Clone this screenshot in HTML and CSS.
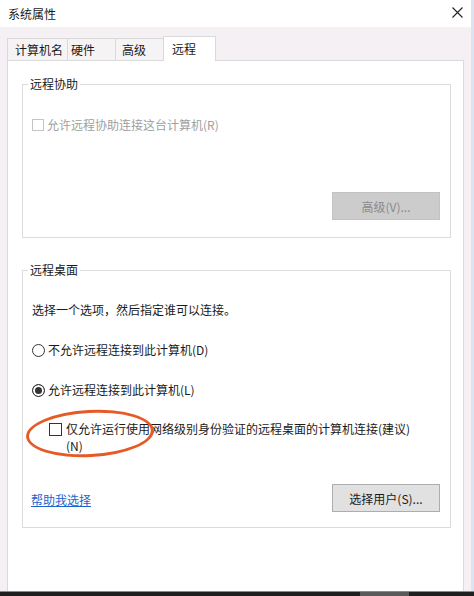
FILE: index.html
```html
<!DOCTYPE html>
<html lang="zh-CN">
<head>
  <meta charset="UTF-8">
  <title>系统属性</title>
  <link rel="stylesheet" href="styles.css">
</head>
<body>
  <div class="window">
    <div class="titlebar">
      <span class="title">系统属性</span>
      <svg class="close" width="11" height="11" viewBox="0 0 11 11">
        <path d="M0.5 0.5 L10.5 10.5 M10.5 0.5 L0.5 10.5" stroke="#222" stroke-width="1.1" fill="none"/>
      </svg>
    </div>

    <div class="tabs">
      <div class="tab t1">计算机名</div>
      <div class="tab t2">硬件</div>
      <div class="tab t3">高级</div>
      <div class="tab active">远程</div>
    </div>

    <div class="page">
      <fieldset class="group assist">
        <legend>远程协助</legend>
        <label class="opt disabled"><span class="box"></span>允许远程协助连接这台计算机(R)</label>
        <div class="actions">
          <button class="btn" disabled>高级(V)...</button>
        </div>
      </fieldset>

      <fieldset class="group desktop">
        <legend>远程桌面</legend>
        <p class="hint">选择一个选项，然后指定谁可以连接。</p>
        <label class="opt"><span class="radio"></span>不允许远程连接到此计算机(D)</label>
        <label class="opt"><span class="radio on"></span>允许远程连接到此计算机(L)</label>
        <label class="opt nla">
          <span class="box"></span>
          <span class="nla-text">仅允许运行使用网络级别身份验证的远程桌面的计算机连接(建议)<br>(N)</span>
          <span class="mark"></span>
        </label>
        <div class="foot">
          <a href="#" class="help">帮助我选择</a>
          <button class="btn">选择用户(S)...</button>
        </div>
      </fieldset>
    </div>
  </div>
  <div class="taskbar"><span class="seg"></span></div>
</body>
</html>
```

FILE: styles.css
```css
body {
  margin: 0;
  font-family: "Noto Sans CJK SC", "Microsoft YaHei", sans-serif;
  font-size: 12px;
  color: #1a1a1a;
  background: #fff;
  overflow: hidden;
}
.window {
  width: 474px;
  height: 591px;
  box-sizing: border-box;
  display: flex;
  flex-direction: column;
  background: #f4f0f3;
  border-right: 3px solid #dbe4f3;
}
.titlebar {
  height: 27px;
  flex: none;
  background: #fff;
  display: flex;
  align-items: center;
  justify-content: space-between;
  padding: 0 8px;
  line-height: 16px;
}
.close { display: block; margin-top: -3px; }

.tabs {
  height: 33px;
  flex: none;
  display: flex;
  align-items: flex-end;
  padding-left: 7px;
}
.tab {
  box-sizing: border-box;
  height: 22px;
  border: 1px solid #d9d9d9;
  border-bottom: none;
  margin-right: -1px;
  padding-top: 1px;
  line-height: 20px;
  background: #f6f3f5;
}
.t1 { width: 61px; padding-left: 7px; }
.t2 { width: 49px; padding-left: 3px; }
.t3 { width: 49px; padding-left: 6px; }
.tab.active {
  width: 53px;
  height: 25px;
  padding-left: 8px;
  line-height: 22px;
  margin-bottom: -1px;
  background: #fff;
  position: relative;
  z-index: 1;
}

.page {
  flex: 1;
  background: #fff;
  border: 1px solid #dadada;
  border-bottom: none;
  margin: 0 7px;
  display: flex;
  flex-direction: column;
}
.group {
  border: 1px solid #dcdcdc;
  margin: 15px 12px 0 14px;
  padding: 0 10px 17px 9px;
  min-width: 0;
}
.group legend {
  padding: 0 2px;
  margin-left: -4px;
  line-height: 16px;
}
.desktop { margin-top: 24px; padding-bottom: 15px; }

.opt {
  display: flex;
  align-items: center;
  gap: 3px;
  line-height: 16px;
  margin-top: 24px;
}
.assist .opt { margin-top: 25px; }
.opt.disabled { color: #a0a0a0; }

.box {
  box-sizing: border-box;
  width: 13px;
  height: 13px;
  border: 1px solid #333;
  background: #fff;
  flex: none;
}
.disabled .box { width: 12px; height: 12px; border-color: #c4c4c4; }
.radio {
  box-sizing: border-box;
  width: 13px;
  height: 13px;
  border: 1px solid #333;
  border-radius: 50%;
  background: #fff;
  flex: none;
}
.radio.on {
  background: #333;
  box-shadow: inset 0 0 0 2px #fff;
}

.hint { margin: 24px 0 0; line-height: 16px; }

.nla {
  position: relative;
  align-items: flex-start;
  padding-left: 17px;
  margin-top: 22px;
  line-height: 17px;
  gap: 4px;
}
.nla .box { margin-top: 3px; }
.mark {
  position: absolute;
  left: -6px;
  top: -10px;
  width: 128px;
  height: 47px;
  box-sizing: border-box;
  border: 3px solid #e65a28;
  border-radius: 50%;
  transform: rotate(-3deg);
  pointer-events: none;
}

.actions {
  display: flex;
  justify-content: flex-end;
  margin-top: 59px;
}
.btn {
  width: 108px;
  height: 28px;
  font: inherit;
  color: #1a1a1a;
  background: #e1e1e1;
  border: 1px solid #adadad;
  padding: 0;
}
.btn:disabled {
  background: #cccccc;
  border-color: #c2c2c2;
  color: #8a8a8a;
}
.foot {
  display: flex;
  justify-content: space-between;
  align-items: center;
  margin-top: 30px;
}
.help {
  color: #1a66cc;
  margin-left: -1px;
  padding-top: 3px;
}

.taskbar {
  height: 5px;
  box-sizing: border-box;
  border-top: 1px solid #8a8a8a;
  background: #1f1f1f;
  display: flex;
  padding-left: 360px;
}
.seg { width: 49px; background: #5a5a5a; }
```
